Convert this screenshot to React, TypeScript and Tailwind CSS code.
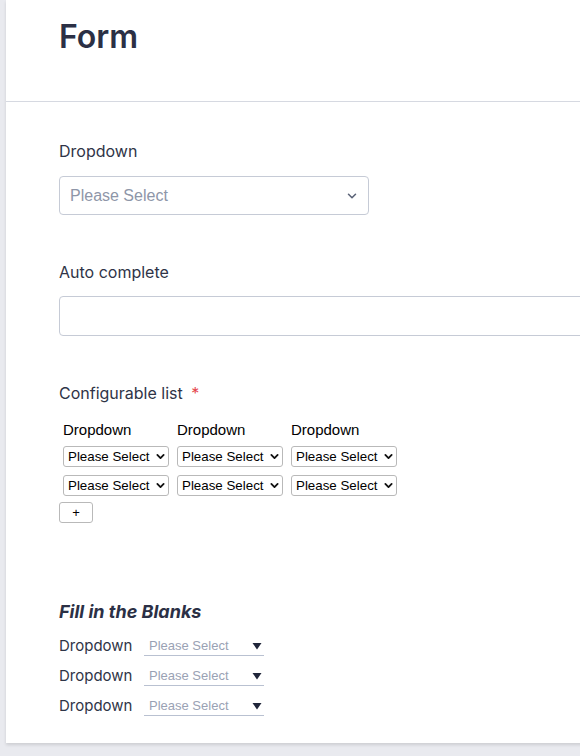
import React from "react";

const inter = { fontFamily: "Inter, 'Noto Sans', sans-serif" };

const Chevron = () => (
  <svg width="14" height="14" viewBox="0 0 24 24" fill="none" stroke="#5b6377" strokeWidth="2.6" strokeLinecap="round" strokeLinejoin="round">
    <path d="M6 9l6 6 6-6" />
  </svg>
);

const NativeSelect = () => (
  <div className="relative w-[106px] h-[21px]">
    <select className="block appearance-none w-full h-[21px] border border-[#b9b9b9] rounded-[3px] bg-white pl-[4px] pr-[14px] text-[13.333px] leading-[19px] text-black font-['Liberation_Sans',Arial,sans-serif]">
      <option>Please Select</option>
    </select>
    <svg className="absolute right-[4px] top-[6px] pointer-events-none" width="9" height="9" viewBox="0 0 10 10" fill="none" stroke="#111" strokeWidth="2" strokeLinecap="round" strokeLinejoin="round">
      <path d="M1.5 3.2L5 6.8 8.5 3.2" />
    </svg>
  </div>
);

const BlankSelect = () => (
  <div className="flex items-center justify-between w-[120px] h-[20px] border-b border-[#b9c1d1] pl-[5px] pr-[2px]">
    <span className="text-[13px] text-[#9aa2b4] font-['Liberation_Sans',Arial,sans-serif]">Please Select</span>
    <svg width="10" height="8" viewBox="0 0 10 8">
      <path d="M0.5 1h9L5 7.5z" fill="#20263a" />
    </svg>
  </div>
);

export default function App() {
  return (
    <div className="min-h-screen bg-[#e9eaef] pl-[6px] pb-[13px] overflow-hidden" style={inter}>
      <div className="bg-white shadow-[0_2px_3px_rgba(0,0,0,0.12)] w-[620px]">
        <div className="h-[102px] border-b border-[#d6d9e1] pl-[53px] pt-[17px]">
          <h1 className="text-[32px] leading-[40px] font-semibold text-[#2b3045]">Form</h1>
        </div>

        <div className="pl-[53px] pt-[37px] pb-[22px] text-[#2f3447]">
          <div className="flex flex-col">
            <label className="text-[16px] leading-[24px]">Dropdown</label>
            <div className="mt-[13px] w-[310px] h-[39px] border border-[#c6cbd6] rounded-[4px] flex items-center justify-between pl-[10px] pr-[9px]">
              <span className="text-[16px] text-[#8e96a8] font-['Liberation_Sans',Arial,sans-serif]">Please Select</span>
              <Chevron />
            </div>
          </div>

          <div className="flex flex-col mt-[45px]">
            <label className="text-[16px] leading-[24px]">Auto complete</label>
            <div className="mt-[12px] w-[560px] h-[40px] border border-[#c6cbd6] rounded-[4px]" />
          </div>

          <div className="flex flex-col mt-[45px]">
            <label className="text-[16px] leading-[24px]">
              Configurable list <span className="text-[#e5484d] ml-[4px]">*</span>
            </label>
            <div className="mt-[15px] pl-[4px] font-['Liberation_Sans',Arial,sans-serif] text-black">
              <div className="grid grid-cols-[114px_114px_114px] text-[15px] leading-[20px]">
                <span>Dropdown</span>
                <span>Dropdown</span>
                <span>Dropdown</span>
              </div>
              <div className="mt-[6px] flex flex-col gap-[8px]">
                {[0, 1].map((r) => (
                  <div key={r} className="grid grid-cols-[114px_114px_114px]">
                    <NativeSelect />
                    <NativeSelect />
                    <NativeSelect />
                  </div>
                ))}
              </div>
            </div>
            <button className="mt-[6px] w-[34px] h-[21px] border border-[#b9b9b9] rounded-[3px] bg-white text-[13px] leading-none text-black font-['Liberation_Sans',Arial,sans-serif]">
              +
            </button>
          </div>

          <div className="mt-[75px]">
            <h2 className="text-[18px] leading-[28px] font-bold italic text-[#2b3045]">Fill in the Blanks</h2>
            <div className="mt-[5px] flex flex-col">
              {[0, 1, 2].map((r) => (
                <div key={r} className="flex items-center h-[30px]">
                  <span className="text-[15px] w-[85px]">Dropdown</span>
                  <BlankSelect />
                </div>
              ))}
            </div>
          </div>
        </div>
      </div>
    </div>
  );
}
